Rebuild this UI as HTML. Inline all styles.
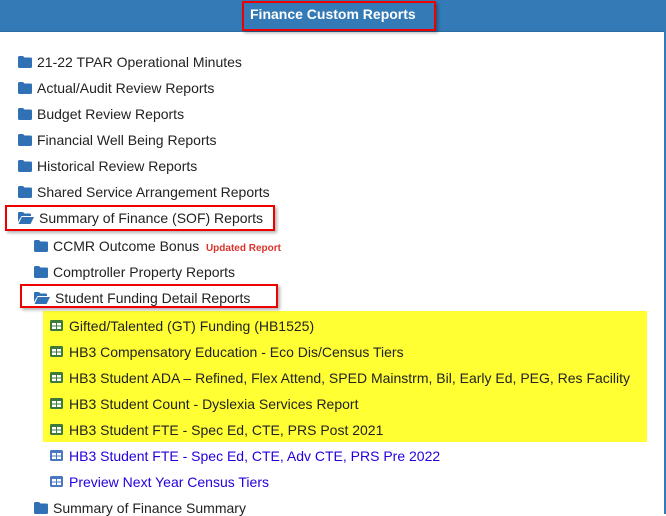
<!DOCTYPE html>
<html><head><style>
body{margin:0;width:666px;height:514px;overflow:hidden;background:#fff;font-family:"Liberation Sans",Arial,sans-serif;font-size:14px;color:#222;position:relative}
.hdr{position:absolute;left:0;top:0;width:666px;height:31px;background:#337ab7;border-bottom:1px solid #2e6da4}
.hdr span{position:absolute;left:250px;top:6px;color:#fff;font-weight:bold;font-size:14px}
.rb{position:absolute;border:2px solid #e00;box-shadow:2px 2px 3px rgba(0,0,0,.3)}
.rbor{position:absolute;left:664px;top:31px;width:2px;height:483px;background:#337ab7}
.it{position:absolute;white-space:nowrap;line-height:16px}
.it svg{position:absolute;left:0;top:2px}
.it span{position:absolute;white-space:nowrap}
.hl{position:absolute;left:43px;top:311px;width:604px;height:131px;background:#ffff33}
.red{color:#d9342b;font-weight:bold;font-size:10px}
.blue{color:#2200dd}
</style></head><body>
<div class="hdr"><span>Finance Custom Reports</span></div>
<div class="rbor"></div>
<div class="hl"></div>
<div id="c"></div>
<div class="rb" style="left:242px;top:1px;width:190px;height:26px"></div>
<div class="rb" style="left:5px;top:205px;width:266px;height:22px"></div>
<div class="rb" style="left:20px;top:284px;width:254px;height:20px"></div>
<script>
var F='<svg width="14" height="12" viewBox="0 0 14 12"><path d="M0 1.5Q0 0 1.5 0H5L6.5 1.5H12.5Q14 1.5 14 3V10.5Q14 12 12.5 12H1.5Q0 12 0 10.5Z" fill="#3071b5"/></svg>';
var O='<svg width="16" height="12" viewBox="0 0 16 12"><path d="M0 1Q0 0 1 0H5L6.5 1.5H12Q13 1.5 13 2.5V4H3.5L0 10Z" fill="#3071b5"/><path d="M3.8 5H16L12.5 12H0.5Z" fill="#3071b5"/></svg>';
function T(c){return '<svg width="13" height="11" viewBox="0 0 13 11"><rect x="0" y="0" width="13" height="11" rx="1.5" fill="'+c+'"/><rect x="2" y="3" width="4" height="2.5" fill="#fff"/><rect x="7" y="3" width="4" height="2.5" fill="#fff"/><rect x="2" y="6.5" width="4" height="2.5" fill="#fff"/><rect x="7" y="6.5" width="4" height="2.5" fill="#fff"/></svg>';}
var items=[
[18,62,F,'21-22 TPAR Operational Minutes'],
[18,88,F,'Actual/Audit Review Reports'],
[18,114,F,'Budget Review Reports'],
[18,140,F,'Financial Well Being Reports'],
[18,166,F,'Historical Review Reports'],
[18,192,F,'Shared Service Arrangement Reports'],
[18,218,O,'Summary of Finance (SOF) Reports',21],
[34,246,F,'CCMR Outcome Bonus <span class="red" style="position:static">&nbsp;Updated Report</span>'],
[34,272,F,'Comptroller Property Reports'],
[34,298,O,'Student Funding Detail Reports',21],
[50,326,T('#3d7a3a'),'Gifted/Talented (GT) Funding (HB1525)'],
[50,352,T('#3d7a3a'),'HB3 Compensatory Education - Eco Dis/Census Tiers'],
[50,378,T('#3d7a3a'),'HB3 Student ADA – Refined, Flex Attend, SPED Mainstrm, Bil, Early Ed, PEG, Res Facility'],
[50,404,T('#3d7a3a'),'HB3 Student Count - Dyslexia Services Report'],
[50,430,T('#3d7a3a'),'HB3 Student FTE - Spec Ed, CTE, PRS Post 2021'],
[50,456,T('#4a78c0'),'<span class="blue" style="position:static">HB3 Student FTE - Spec Ed, CTE, Adv CTE, PRS Pre 2022</span>'],
[50,482,T('#4a78c0'),'<span class="blue" style="position:static">Preview Next Year Census Tiers</span>'],
[34,508,F,'Summary of Finance Summary']];
var h='';items.forEach(function(a){var tx=a[4]||19;h+='<div class="it" style="left:'+a[0]+'px;top:'+(a[1]-8)+'px">'+a[2]+'<span style="left:'+tx+'px;top:0">'+a[3]+'</span></div>';});
document.getElementById('c').innerHTML=h;
</script>
</body></html>
